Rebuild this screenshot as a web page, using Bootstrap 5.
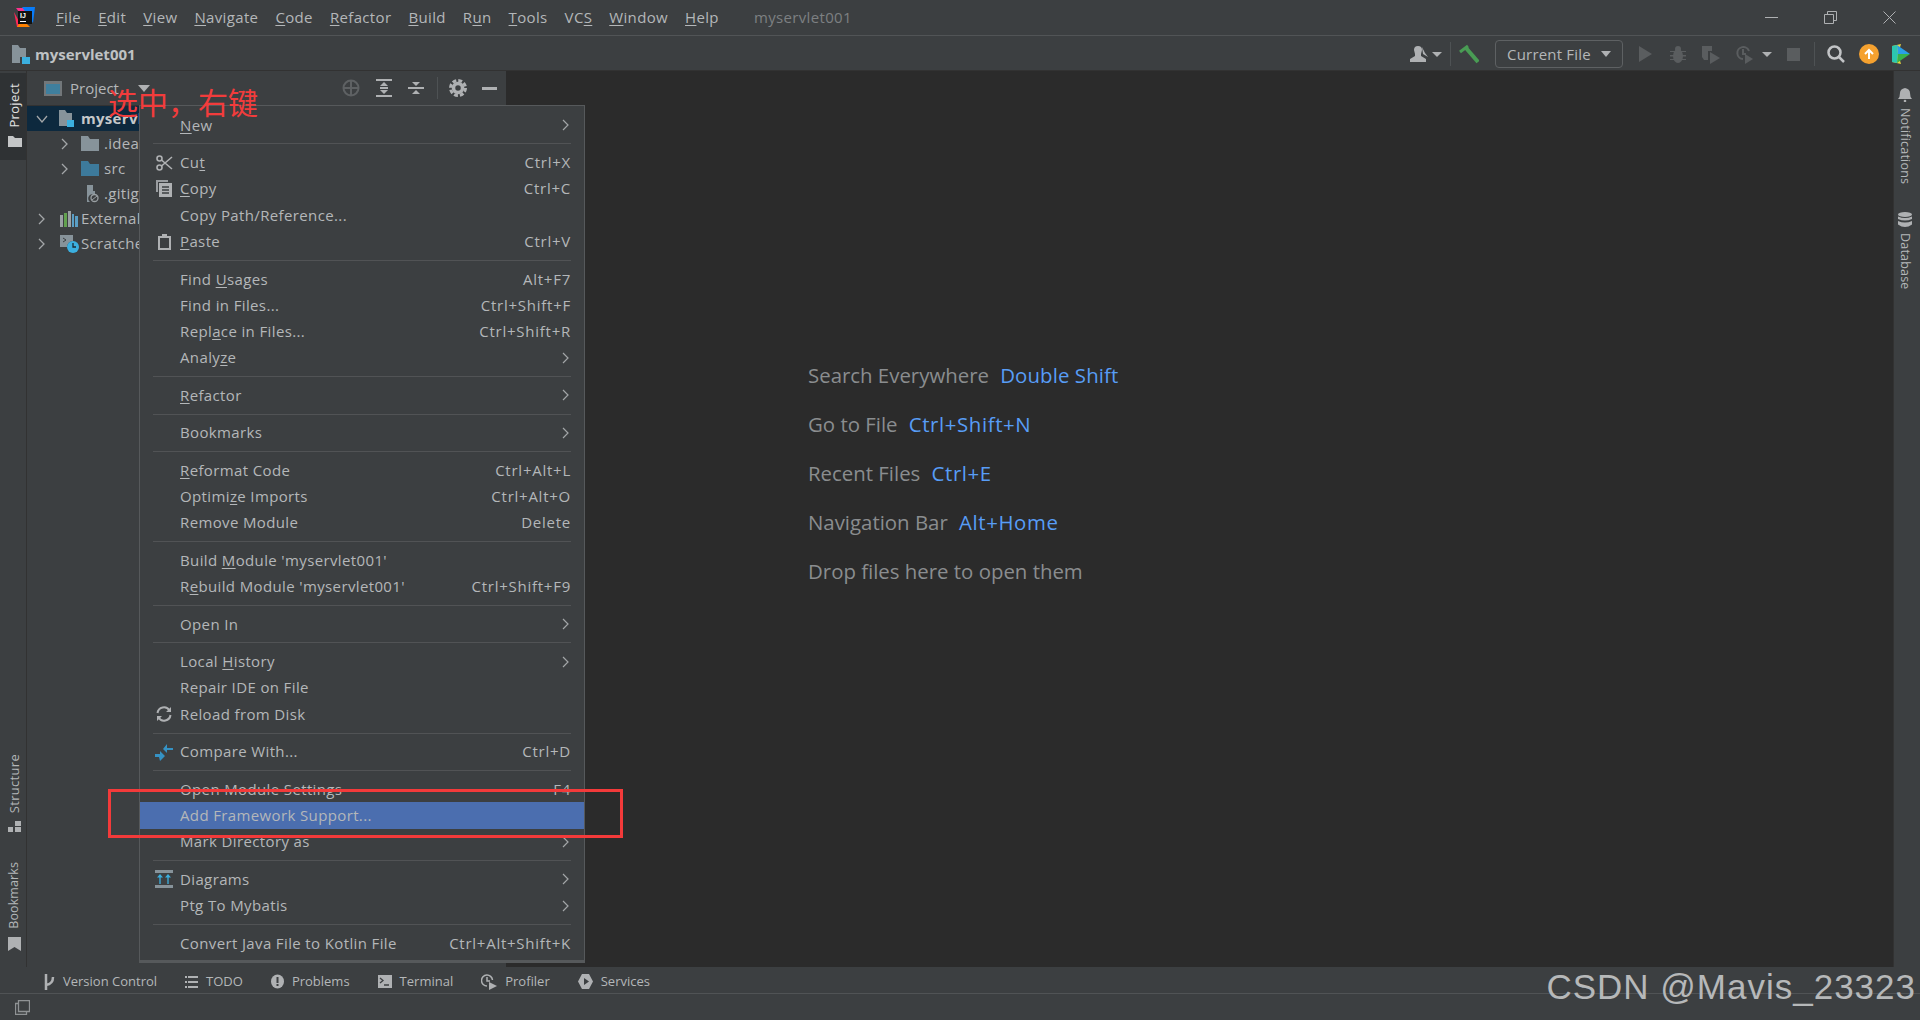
<!DOCTYPE html>
<html lang="en">
<head>
    <meta charset="UTF-8">
    <title>myservlet001</title>
    <link href="https://cdn.jsdelivr.net/npm/bootstrap@5.3.0/dist/css/bootstrap.min.css" rel="stylesheet">
    <style>
        html, body { height: 100%; }
        body { background: #3c3f41; color: #b4b7b9; font-family: "Open Sans", "Liberation Sans", sans-serif; font-size: 15px; overflow: hidden; }
        u { text-underline-offset: 2px; text-decoration-thickness: 1px; }
        svg { display: block; flex: none; }

        .ide { height: 1020px; }
        .titlebar { height: 36px; border-bottom: 1px solid #515456; padding-left: 14px; }
        .titlebar .logo { margin-right: 20px; }
        .titlebar .menus { gap: 17px; letter-spacing: .35px; }
        .titlebar .title { color: #7d8082; margin-left: 35px; letter-spacing: .35px; }
        .winbtns { margin-left: auto; gap: 46px; padding-right: 24px; }
        .toolbar { height: 35px; border-bottom: 1px solid #323232; padding: 2px 0 0 12px; }
        .toolbar .crumb { font-weight: 700; color: #bfc2c4; margin-left: 4px; font-size: 15px; }
        .toolbar .tools { margin-left: auto; padding-right: 10px; }
        .vsep { width: 1px; height: 24px; background: #4e5254; }
        .runbox { width: 128px; height: 28px; border: 1px solid #5e6163; border-radius: 4px; padding: 0 11px; letter-spacing: .2px; }

        .strip { width: 27px; flex: none; }
        .strip.left { border-right: 1px solid #323232; }
        .strip.right { border-left: 1px solid #323232; }
        .vtext { writing-mode: vertical-rl; font-size: 13px; letter-spacing: .3px; line-height: 1; }
        .strip.left .vtext { transform: rotate(180deg); }
        .strip.left .vtext, .strip.left svg { margin-left: 3px; }
        .strip.right .vtext, .strip.right svg { margin-right: 4px; }
        .strip.right .vtext { font-size: 12.5px; letter-spacing: .2px; }
        .strip .tab { height: 87px; padding-top: 10px; gap: 8px; background: #2f3234; color: #e2e2e2; margin-top: 2px; }
        .strip .low { margin-top: auto; padding-bottom: 16px; }
        .strip .low .vtext + svg { margin-top: -6px; }
        .strip .low .book { font-size: 12.5px; letter-spacing: .1px; margin-top: 16px; }
        .strip.right .item { padding-top: 16px; gap: 6px; }
        .strip.right .item + .item { padding-top: 28px; }

        .panel { width: 479px; flex: none; }
        .panel-head { height: 35px; padding-left: 17px; border-bottom: 1px solid #323232; }
        .panel-head .tools { margin-left: auto; padding-right: 9px; }
        .tree-row { height: 25px; white-space: nowrap; letter-spacing: .3px; }
        .tree-row.sel { background: #0d293e; font-weight: 700; color: #c5c8ca; }
        .editor { background: #2b2b2b; padding: 290px 0 0 302px; color: #8a8d8f; font-size: 20.4px; }
        .editor .hint { height: 49px; line-height: 28px; }
        .editor .key { color: #589df6; margin-left: 6px; letter-spacing: .6px; }
        .editor .key.tight { letter-spacing: .1px; }

        .toolwins { height: 27px; border-bottom: 1px solid #505355; padding: 3px 0 0 44px; font-size: 13px; }
        .toolwins .tw { gap: 8px; }
        .toolwins .tw + .tw { margin-left: 28px; }
        .statusbar { height: 26px; padding-left: 15px; }

        .ctx.dropdown-menu { left: 139px; top: 105px; width: 446px; height: 858px; padding: 6px 0 0; margin: 0; background: #3c3f41; border: 1px solid #56595b; border-bottom-width: 3px; border-radius: 0; font-size: 15px; }
        .ctx .dropdown-item { display: flex; align-items: center; height: 26.3px; padding: 0 13px 0 1px; color: #b4b7b9; line-height: 1; letter-spacing: .37px; }
        .ctx .dropdown-item.active { background: #4b6eaf; color: #b4b7b9; }
        .ctx .ico { width: 39px; flex: none; display: flex; justify-content: center; padding-left: 7px; }
        .ctx .sc { margin-left: auto; letter-spacing: .75px; }
        .ctx svg.sc { margin-right: 2px; }
        .ctx .dropdown-divider { margin: 5.1px 13px 5.1px 13px; border-top: 1px solid #515355; opacity: 1; }

        .mark-box { left: 108px; top: 789px; width: 515px; height: 49px; border: 3px solid #f33a3a; z-index: 1001; }
        .mark-text { left: 108px; top: 80px; font-family: "Noto Sans CJK SC", sans-serif; font-size: 30px; line-height: 1.4; color: #f23c3c; white-space: nowrap; z-index: 1001; }
        .watermark { right: 4px; top: 967px; font-family: "Liberation Sans", sans-serif; font-size: 35px; letter-spacing: 1px; line-height: 40px; color: #b6b8b9; white-space: nowrap; z-index: 1001; }
    </style>
</head>
<body>
<div class="ide d-flex flex-column position-relative">

    <!-- title bar -->
    <div class="titlebar d-flex align-items-center flex-none">
        <svg class="logo" width="22" height="21" viewBox="0 0 22 21"><path d="M2 1h12l-6 8z" fill="#fc318c"/><path d="M8 0h13l-2 16z" fill="#087cfa"/><path d="M0 5l8 15H3z" fill="#fe2857"/><path d="M3 20l5-8 8 8z" fill="#ff8100"/><rect x="4" y="4" width="14" height="13" fill="#111"/><text x="6" y="11" font-size="7" font-family="Liberation Sans" font-weight="700" fill="#fff">IJ</text><rect x="6" y="14" width="6" height="1" fill="#fff"/></svg>
        <div class="menus d-flex">
            <span><u>F</u>ile</span><span><u>E</u>dit</span><span><u>V</u>iew</span><span><u>N</u>avigate</span><span><u>C</u>ode</span><span><u>R</u>efactor</span><span><u>B</u>uild</span><span>R<u>u</u>n</span><span><u>T</u>ools</span><span>VC<u>S</u></span><span><u>W</u>indow</span><span><u>H</u>elp</span>
        </div>
        <span class="title">myservlet001</span>
        <div class="winbtns d-flex align-items-center">
            <svg width="13" height="13" viewBox="0 0 13 13"><path d="M0 6.500h13" stroke="#aeb0b2"/></svg>
            <svg width="13" height="13" viewBox="0 0 13 13" fill="none" stroke="#aeb0b2"><path d="M.5 3.500h9v9h-9zM3.500 3V.5h9v9H10"/></svg>
            <svg width="13" height="13" viewBox="0 0 13 13"><path d="M.5.5l12 12M12.500.5l-12 12" stroke="#aeb0b2"/></svg>
        </div>
    </div>

    <!-- navigation toolbar -->
    <div class="toolbar d-flex align-items-center">
        <svg width="19" height="20" viewBox="0 0 19 20"><path d="M0 1h6l2 3h6v9H8v6H0z" fill="#87939a"/><rect x="10" y="13" width="8" height="7" fill="#3bb0e0"/></svg>
        <span class="crumb">myservlet001</span>
        <div class="tools d-flex align-items-center">
            <svg width="18" height="16" viewBox="0 0 18 16" fill="#afb1b3"><path d="M0 16v-3l5-3V8L4 4q0-4 4-4t4 4l-1 4v2l5 3v3z"/><path d="M12 1l3 6 3 4-5-3z"/></svg>
            <svg class="ms-1" width="10" height="5" viewBox="0 0 10 5"><path d="M0 0h10L5 5z" fill="#afb1b3"/></svg>
            <div class="vsep ms-2"></div>
            <svg class="ms-2" width="20" height="20" viewBox="0 0 20 20" fill="none" stroke="#499c54"><path d="M7 4l12 14" stroke-width="4"/><path d="M1 8l8-6" stroke-width="3"/></svg>
            <div class="runbox d-flex align-items-center justify-content-between ms-3">
                <span>Current File</span>
                <svg width="10" height="6" viewBox="0 0 10 6"><path d="M0 0h10L5 6z" fill="#afb1b3"/></svg>
            </div>
            <svg class="ms-3" width="13" height="16" viewBox="0 0 13 16"><path d="M0 0l13 8-13 8z" fill="#5a5d5f"/></svg>
            <svg style="margin-left:18px" width="16" height="17" viewBox="0 0 16 17" fill="#5a5d5f"><ellipse cx="8" cy="10" rx="5" ry="7"/><circle cx="8" cy="3" r="3"/><path d="M0 5h16v1H0zM0 9h16v1.500H0zM0 13h16v1H0z"/></svg>
            <svg style="margin-left:16px" width="18" height="19" viewBox="0 0 18 19" fill="#5a5d5f"><path d="M0 1h10v5H6v9H2L0 12z"/><path d="M8 7l10 6-10 6z"/></svg>
            <svg style="margin-left:16px" width="18" height="19" viewBox="0 0 18 19" fill="none" stroke="#5a5d5f" stroke-width="2"><path d="M7 14a6 6 0 1 1 6-8M7 4v5h3"/><path d="M9 9l8 5-8 5z" fill="#5a5d5f" stroke="none"/></svg>
            <svg class="ms-2" width="10" height="5" viewBox="0 0 10 5"><path d="M0 0h10L5 5z" fill="#afb1b3"/></svg>
            <svg style="margin-left:15px" width="13" height="13" viewBox="0 0 13 13"><rect width="13" height="13" fill="#5a5d5f"/></svg>
            <div class="vsep" style="margin-left:14px"></div>
            <svg style="margin-left:12px" width="18" height="18" viewBox="0 0 18 18" fill="none" stroke="#c2c4c6" stroke-width="2.500"><circle cx="7.500" cy="7.500" r="6"/><path d="M12 12l5 5"/></svg>
            <svg style="margin-left:14px" width="20" height="20" viewBox="0 0 20 20"><circle cx="10" cy="10" r="10" fill="#f5a12f"/><path d="M10 15V6M6 10l4-4 4 4" fill="none" stroke="#fff" stroke-width="2"/></svg>
            <svg style="margin-left:13px" width="18" height="20" viewBox="0 0 18 20"><path d="M0 2l9-2-3 10 3 10-9-2z" fill="#e8d33f"/><path d="M0 2l5-1 1 9-1 9-5-1z" fill="#2cc7b0"/><path d="M5 1l13 9H6z" fill="#2a9fe8"/><path d="M18 10L5 19l1-9z" fill="#37b24d"/></svg>
        </div>
    </div>

    <!-- main area -->
    <div class="d-flex flex-grow-1" style="min-height:0">
        <div class="strip left d-flex flex-column align-items-center">
            <div class="tab d-flex flex-column align-items-center w-100">
                <span class="vtext">Project</span>
                <svg width="14" height="11" viewBox="0 0 14 11"><path d="M0 0h5l2 2h7v9H0z" fill="#c4c6c7"/></svg>
            </div>
            <div class="low d-flex flex-column align-items-center" style="gap:14px">
                <span class="vtext">Structure</span>
                <svg width="13" height="11" viewBox="0 0 13 11" fill="#afb1b3"><path d="M7 0h6v5H7zM0 6h5v5H0zM7 6h6v5H7z"/></svg>
                <span class="vtext book">Bookmarks</span>
                <svg width="13" height="14" viewBox="0 0 13 14" fill="#afb1b3"><path d="M0 0h13v14L6.500 10 0 14z"/></svg>
            </div>
        </div>

        <div class="panel d-flex flex-column">
            <div class="panel-head d-flex align-items-center">
                <svg width="18" height="15" viewBox="0 0 18 15"><rect width="18" height="15" fill="#72777a"/><rect x="2" y="3" width="14" height="10" fill="#3f7f9e"/></svg>
                <span class="ms-2">Project</span>
                <svg style="margin-left:19px" width="12" height="7" viewBox="0 0 12 7"><path d="M0 0h12L6 7z" fill="#afb1b3"/></svg>
                <div class="tools d-flex align-items-center">
                    <svg width="18" height="18" viewBox="0 0 18 18" fill="none" stroke="#5e6163" stroke-width="2"><circle cx="9" cy="9" r="7.500"/><path d="M9 1v16M1 9h16"/></svg>
                    <svg style="margin-left:16px" width="16" height="18" viewBox="0 0 16 18" fill="#afb1b3"><path d="M0 0h16v2H0zM0 16h16v2H0zM8 3l4 4H4zM8 15l-4-4h8zM4 8h8v2H4z"/></svg>
                    <svg style="margin-left:16px" width="16" height="18" viewBox="0 0 16 18" fill="#afb1b3"><path d="M0 8h16v2H0zM8 7L4 3h8zM8 11l4 4H4z"/></svg>
                    <div class="vsep" style="margin-left:13px;height:22px"></div>
                    <svg style="margin-left:11px" width="18" height="18" viewBox="0 0 18 18" fill="none" stroke="#afb1b3"><circle cx="9" cy="9" r="4.500" stroke-width="3.500"/><circle cx="9" cy="9" r="7.500" stroke-width="3" stroke-dasharray="3.900 2"/></svg>
                    <svg style="margin-left:15px" width="15" height="3" viewBox="0 0 15 3"><rect width="15" height="3" fill="#afb1b3"/></svg>
                </div>
            </div>
            <div class="tree-row sel d-flex align-items-center">
                <svg style="margin-left:9px" width="12" height="8" viewBox="0 0 12 8" fill="none" stroke="#a3a6a8" stroke-width="1.300"><path d="M1 1l5 6 5-6"/></svg>
                <svg style="margin-left:11px" width="15" height="18" viewBox="0 0 15 18"><path d="M0 0h6l2 3h5v8H8v5H0z" fill="#87939a"/><rect x="8" y="10" width="7" height="7" fill="#3bb0e0"/></svg>
                <span style="margin-left:7px">myservlet001</span>
            </div>
            <div class="tree-row d-flex align-items-center">
                <svg style="margin-left:34px" width="7" height="12" viewBox="0 0 7 12" fill="none" stroke="#a3a6a8" stroke-width="1.300"><path d="M1 1l5 5-5 5"/></svg>
                <svg style="margin-left:13px" width="18" height="15" viewBox="0 0 18 15"><path d="M0 0h7l2 3h9v12H0z" fill="#87939a"/></svg>
                <span style="margin-left:5px">.idea</span>
            </div>
            <div class="tree-row d-flex align-items-center">
                <svg style="margin-left:34px" width="7" height="12" viewBox="0 0 7 12" fill="none" stroke="#a3a6a8" stroke-width="1.300"><path d="M1 1l5 5-5 5"/></svg>
                <svg style="margin-left:13px" width="18" height="15" viewBox="0 0 18 15"><path d="M0 0h7l2 3h9v12H0z" fill="#3d7a9b"/></svg>
                <span style="margin-left:5px">src</span>
            </div>
            <div class="tree-row d-flex align-items-center">
                <svg style="margin-left:57px" width="15" height="18" viewBox="0 0 15 18"><path d="M3 0h6v6h2v4a4 4 0 0 0-5 7H3z" fill="#87939a"/><circle cx="10.500" cy="13" r="3.500" fill="none" stroke="#9aa0a3" stroke-width="1.300"/><path d="M8 15l5-4" stroke="#9aa0a3"/></svg>
                <span style="margin-left:5px">.gitignore</span>
            </div>
            <div class="tree-row d-flex align-items-center">
                <svg style="margin-left:11px" width="7" height="12" viewBox="0 0 7 12" fill="none" stroke="#a3a6a8" stroke-width="1.300"><path d="M1 1l5 5-5 5"/></svg>
                <svg style="margin-left:15px" width="18" height="16" viewBox="0 0 18 16"><path d="M0 4h3v12H0z" fill="#9aa0a3"/><path d="M4 2h3v14H4z" fill="#62a14f"/><path d="M8 0h3v16H8z" fill="#9aa0a3"/><path d="M12 3h2v13h-2zM15 5h3v11h-3z" fill="#5a9ec4"/></svg>
                <span style="margin-left:3px">External Libraries</span>
            </div>
            <div class="tree-row d-flex align-items-center">
                <svg style="margin-left:11px" width="7" height="12" viewBox="0 0 7 12" fill="none" stroke="#a3a6a8" stroke-width="1.300"><path d="M1 1l5 5-5 5"/></svg>
                <svg style="margin-left:15px" width="19" height="18" viewBox="0 0 19 18"><path d="M0 0h13v6a6 6 0 0 0-6 6H0z" fill="#87939a"/><path d="M3 3l3 2-3 2" fill="none" stroke="#3c3f41"/><circle cx="13" cy="12" r="6" fill="#3bb0e0"/><path d="M13 8v4h3" fill="none" stroke="#1d2a33" stroke-width="1.300"/></svg>
                <span style="margin-left:2px">Scratches and Consoles</span>
            </div>
        </div>

        <div class="editor flex-grow-1">
            <div class="hint">Search Everywhere <span class="key tight">Double Shift</span></div>
            <div class="hint">Go to File <span class="key">Ctrl+Shift+N</span></div>
            <div class="hint">Recent Files <span class="key">Ctrl+E</span></div>
            <div class="hint">Navigation Bar <span class="key">Alt+Home</span></div>
            <div class="hint">Drop files here to open them</div>
        </div>

        <div class="strip right d-flex flex-column align-items-center">
            <div class="item d-flex flex-column align-items-center">
                <svg width="14" height="15" viewBox="0 0 14 15" fill="#afb1b3"><path d="M0 12q2-2 2-6t5-5q5 1 5 5t2 6z"/><circle cx="7" cy="14" r="1.300"/></svg>
                <span class="vtext">Notifications</span>
            </div>
            <div class="item d-flex flex-column align-items-center">
                <svg width="14" height="15" viewBox="0 0 14 15" fill="#afb1b3"><ellipse cx="7" cy="2.500" rx="7" ry="2.500"/><path d="M0 4.500q7 3 14 0v2.500q-7 3-14 0zM0 9q7 3 14 0v3.500q-7 5-14 0z"/></svg>
                <span class="vtext">Database</span>
            </div>
        </div>
    </div>

    <!-- tool window bar -->
    <div class="toolwins d-flex align-items-center">
        <div class="tw d-flex align-items-center">
            <svg width="11" height="16" viewBox="0 0 11 16" fill="none" stroke="#afb1b3" stroke-width="2.500"><path d="M2 0v16M2 11q7-1 7-8"/></svg>
            <span>Version Control</span>
        </div>
        <div class="tw d-flex align-items-center">
            <svg width="13" height="12" viewBox="0 0 13 12" fill="#afb1b3"><path d="M0 0h2v2H0zM3 0h10v2H3zM0 5h2v2H0zM3 5h10v2H3zM0 10h2v2H0zM3 10h10v2H3z"/></svg>
            <span>TODO</span>
        </div>
        <div class="tw d-flex align-items-center">
            <svg width="13" height="15" viewBox="0 0 13 15"><ellipse cx="6.500" cy="7.500" rx="6.500" ry="7" fill="#afb1b3"/><path d="M6.500 3v6M6.500 10v2" stroke="#3c3f41" stroke-width="2"/></svg>
            <span>Problems</span>
        </div>
        <div class="tw d-flex align-items-center">
            <svg width="14" height="13" viewBox="0 0 14 13"><rect width="14" height="13" fill="#afb1b3"/><path d="M2 3l3 2.500L2 8M6 10h5" fill="none" stroke="#3c3f41" stroke-width="1.300"/></svg>
            <span>Terminal</span>
        </div>
        <div class="tw d-flex align-items-center">
            <svg width="16" height="16" viewBox="0 0 16 16" fill="none" stroke="#afb1b3" stroke-width="1.500"><path d="M6 12a5.500 5.500 0 1 1 5.500-6M6 3v4h3"/><path d="M8 8l8 4-8 4z" fill="#afb1b3" stroke="none"/></svg>
            <span>Profiler</span>
        </div>
        <div class="tw d-flex align-items-center">
            <svg width="15" height="15" viewBox="0 0 15 15"><path d="M4 0h7l4 7.500-4 7.500H4L0 7.500z" fill="#afb1b3"/><path d="M6 4l5 3.500L6 11z" fill="#3c3f41"/></svg>
            <span>Services</span>
        </div>
    </div>

    <!-- status bar -->
    <div class="statusbar d-flex align-items-center">
        <svg width="15" height="15" viewBox="0 0 15 15" fill="none" stroke="#8f9294" stroke-width="1.300"><path d="M3.500.5h11v11h-11zM3 3.500H.5v11h11V12"/></svg>
    </div>

    <!-- context menu -->
    <div class="ctx dropdown-menu show">
        <div class="dropdown-item"><span class="ico"></span><span><u>N</u>ew</span><svg class="sc" width="7" height="12" viewBox="0 0 7 12" fill="none" stroke="#a3a6a8" stroke-width="1.200"><path d="M1 1l5 5-5 5"/></svg></div>
        <hr class="dropdown-divider">
        <div class="dropdown-item"><span class="ico"><svg width="17" height="16" viewBox="0 0 17 16" fill="none" stroke="#afb1b3" stroke-width="1.600"><circle cx="3.500" cy="3.500" r="2.500"/><circle cx="3.500" cy="12.500" r="2.500"/><path d="M5.500 5L16 14M5.500 11L16 2"/></svg></span><span>Cu<u>t</u></span><span class="sc">Ctrl+X</span></div>
        <div class="dropdown-item"><span class="ico"><svg width="16" height="17" viewBox="0 0 16 17"><path d="M0 0h12v2H2v10H0z" fill="#9a9da0"/><rect x="3" y="3" width="13" height="14" fill="#afb1b3"/><path d="M6 7h7M6 10h7M6 13h7" stroke="#3c3f41" stroke-width="1.300"/></svg></span><span><u>C</u>opy</span><span class="sc">Ctrl+C</span></div>
        <div class="dropdown-item"><span class="ico"></span><span>Copy Path/Reference...</span></div>
        <div class="dropdown-item"><span class="ico"><svg width="13" height="16" viewBox="0 0 13 16" fill="none" stroke="#afb1b3" stroke-width="2"><path d="M1 3h11v12H1z"/><path d="M4 1.500h5" stroke-width="3"/></svg></span><span><u>P</u>aste</span><span class="sc">Ctrl+V</span></div>
        <hr class="dropdown-divider">
        <div class="dropdown-item"><span class="ico"></span><span>Find <u>U</u>sages</span><span class="sc">Alt+F7</span></div>
        <div class="dropdown-item"><span class="ico"></span><span>Find in Files...</span><span class="sc">Ctrl+Shift+F</span></div>
        <div class="dropdown-item"><span class="ico"></span><span>Repl<u>a</u>ce in Files...</span><span class="sc">Ctrl+Shift+R</span></div>
        <div class="dropdown-item"><span class="ico"></span><span>Analy<u>z</u>e</span><svg class="sc" width="7" height="12" viewBox="0 0 7 12" fill="none" stroke="#a3a6a8" stroke-width="1.200"><path d="M1 1l5 5-5 5"/></svg></div>
        <hr class="dropdown-divider">
        <div class="dropdown-item"><span class="ico"></span><span><u>R</u>efactor</span><svg class="sc" width="7" height="12" viewBox="0 0 7 12" fill="none" stroke="#a3a6a8" stroke-width="1.200"><path d="M1 1l5 5-5 5"/></svg></div>
        <hr class="dropdown-divider">
        <div class="dropdown-item"><span class="ico"></span><span>Bookmarks</span><svg class="sc" width="7" height="12" viewBox="0 0 7 12" fill="none" stroke="#a3a6a8" stroke-width="1.200"><path d="M1 1l5 5-5 5"/></svg></div>
        <hr class="dropdown-divider">
        <div class="dropdown-item"><span class="ico"></span><span><u>R</u>eformat Code</span><span class="sc">Ctrl+Alt+L</span></div>
        <div class="dropdown-item"><span class="ico"></span><span>Optimi<u>z</u>e Imports</span><span class="sc">Ctrl+Alt+O</span></div>
        <div class="dropdown-item"><span class="ico"></span><span>Remove Module</span><span class="sc">Delete</span></div>
        <hr class="dropdown-divider">
        <div class="dropdown-item"><span class="ico"></span><span>Build <u>M</u>odule 'myservlet001'</span></div>
        <div class="dropdown-item"><span class="ico"></span><span>R<u>e</u>build Module 'myservlet001'</span><span class="sc">Ctrl+Shift+F9</span></div>
        <hr class="dropdown-divider">
        <div class="dropdown-item"><span class="ico"></span><span>Open In</span><svg class="sc" width="7" height="12" viewBox="0 0 7 12" fill="none" stroke="#a3a6a8" stroke-width="1.200"><path d="M1 1l5 5-5 5"/></svg></div>
        <hr class="dropdown-divider">
        <div class="dropdown-item"><span class="ico"></span><span>Local <u>H</u>istory</span><svg class="sc" width="7" height="12" viewBox="0 0 7 12" fill="none" stroke="#a3a6a8" stroke-width="1.200"><path d="M1 1l5 5-5 5"/></svg></div>
        <div class="dropdown-item"><span class="ico"></span><span>Repair IDE on File</span></div>
        <div class="dropdown-item"><span class="ico"><svg width="16" height="16" viewBox="0 0 16 16" fill="none" stroke="#afb1b3" stroke-width="2"><path d="M1.500 7a6.500 6.500 0 0 1 12-2.500M14.500 9a6.500 6.500 0 0 1-12 2.500"/><path d="M15 1v5h-5zM1 15v-5h5z" stroke="none" fill="#afb1b3"/></svg></span><span>Reload from Disk</span></div>
        <hr class="dropdown-divider">
        <div class="dropdown-item"><span class="ico"><svg width="18" height="18" viewBox="0 0 18 18" fill="#3592c4"><path d="M0 11h5V8l5 5-5 5-1-4H0zM18 5h-6V1L8 6l4 4V7h6z"/></svg></span><span>Compare With...</span><span class="sc">Ctrl+D</span></div>
        <hr class="dropdown-divider">
        <div class="dropdown-item"><span class="ico"></span><span>Open Module Settings</span><span class="sc">F4</span></div>
        <div class="dropdown-item active"><span class="ico"></span><span>Add Framework Support...</span></div>
        <div class="dropdown-item"><span class="ico"></span><span>Mark Directory as</span><svg class="sc" width="7" height="12" viewBox="0 0 7 12" fill="none" stroke="#a3a6a8" stroke-width="1.200"><path d="M1 1l5 5-5 5"/></svg></div>
        <hr class="dropdown-divider">
        <div class="dropdown-item"><span class="ico"><svg width="18" height="18" viewBox="0 0 18 18"><path d="M0 0h18v3H0zM0 15h18v3H0z" fill="#87939a"/><path d="M5 14V7M13 14V7" stroke="#3bb0e0" stroke-width="1.300"/><path d="M5 4l3 3.500H2zM13 4l3 3.500h-6z" fill="#3bb0e0"/></svg></span><span>Diagrams</span><svg class="sc" width="7" height="12" viewBox="0 0 7 12" fill="none" stroke="#a3a6a8" stroke-width="1.200"><path d="M1 1l5 5-5 5"/></svg></div>
        <div class="dropdown-item"><span class="ico"></span><span>Ptg To Mybatis</span><svg class="sc" width="7" height="12" viewBox="0 0 7 12" fill="none" stroke="#a3a6a8" stroke-width="1.200"><path d="M1 1l5 5-5 5"/></svg></div>
        <hr class="dropdown-divider">
        <div class="dropdown-item"><span class="ico"></span><span>Convert Java File to Kotlin File</span><span class="sc">Ctrl+Alt+Shift+K</span></div>
    </div>

    <!-- annotations on top of the screenshot -->
    <div class="mark-text position-absolute">选中，右键</div>
    <div class="mark-box position-absolute"></div>
    <div class="watermark position-absolute">CSDN @Mavis_23323</div>
</div>
<script src="https://cdn.jsdelivr.net/npm/bootstrap@5.3.0/dist/js/bootstrap.bundle.min.js"></script>
</body>
</html>
